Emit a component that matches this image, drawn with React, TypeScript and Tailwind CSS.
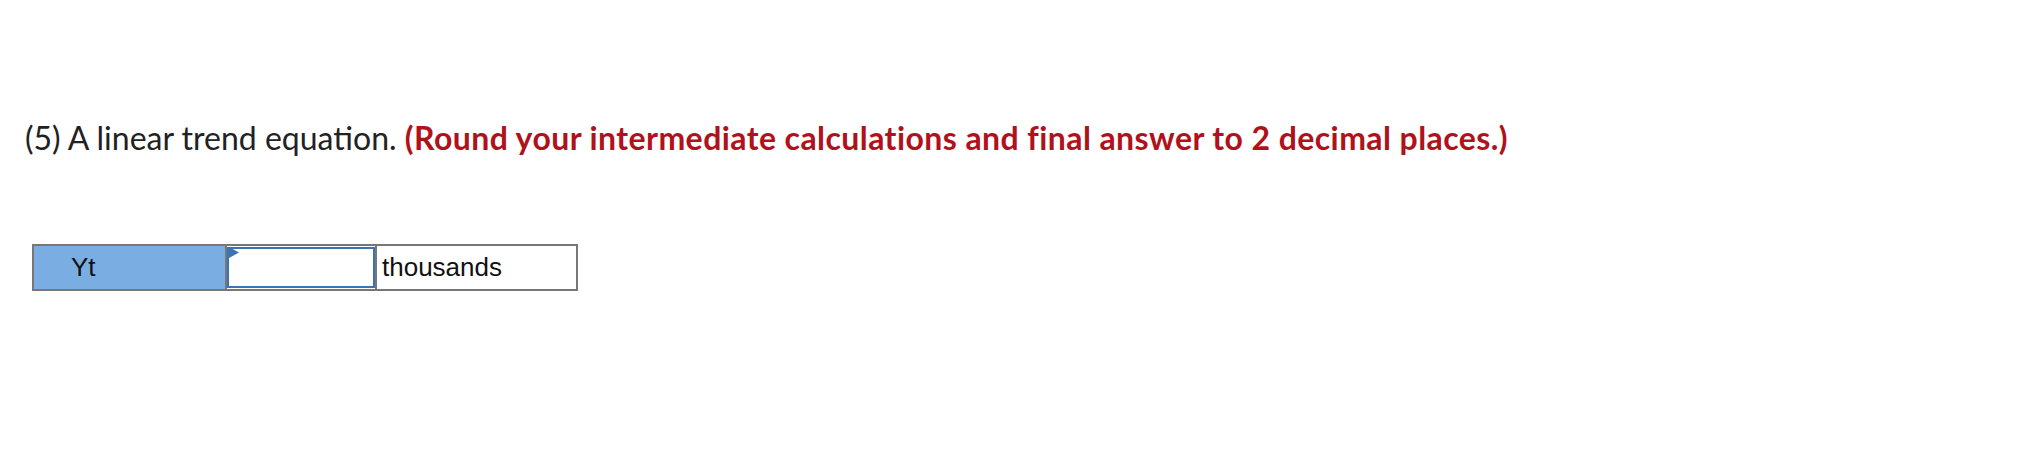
import React from "react"

const labelFont = { fontFamily: '"Liberation Sans", Arial, sans-serif' }

export default function App() {
  const [value, setValue] = React.useState("")

  return (
    <div className="min-h-[452px] w-full bg-white pl-[25px] pt-[118px]">
      <p className="font-['Lato',sans-serif] text-[32px] leading-[40px] text-[#222]">
        (5) A linear trend equation.{" "}
        <strong className="font-bold tracking-[0.42px] text-[#b0121c]">
          (Round your intermediate calculations and final answer to 2 decimal places.)
        </strong>
      </p>

      <div
        className="ml-[7px] mt-[86px] flex h-[47px] w-[546px] border-2 border-[#777]"
        style={labelFont}
      >
        <div className="flex w-[191px] items-center bg-[#7aaee3] pl-[37px] text-[26px] text-[#111]">
          Yt
        </div>
        <div className="relative w-[150px] border-l-2 border-[#777] py-px">
          <input
            value={value}
            onChange={(e) => setValue(e.target.value)}
            className="h-full w-full border-2 border-[#3a73b6] bg-white px-2 text-[24px] outline-none"
          />
          <svg
            className="pointer-events-none absolute left-[2px] top-px"
            width="10"
            height="11"
            viewBox="0 0 10 11"
          >
            <path d="M0 0 L10 5.5 L0 11 Z" fill="#3a73b6" />
          </svg>
        </div>
        <div className="flex flex-1 items-center border-l-2 border-[#777] pl-[5px] text-[26px] text-[#111]">
          thousands
        </div>
      </div>
    </div>
  )
}
